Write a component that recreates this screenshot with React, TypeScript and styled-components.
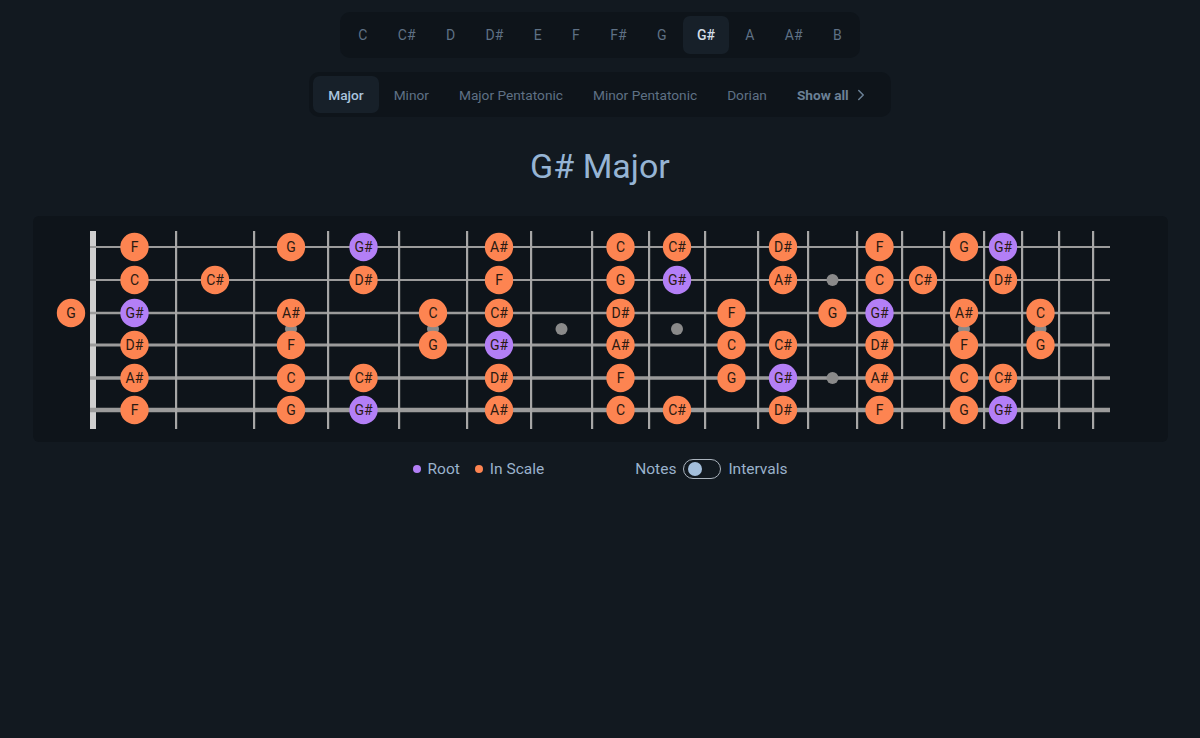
import React, { useState } from "react";
import styled, { createGlobalStyle } from "styled-components";
import { ChevronRight } from "lucide-react";

const NOTES = ["C", "C#", "D", "D#", "E", "F", "F#", "G", "G#", "A", "A#", "B"];
const SCALES: { [name: string]: number[] } = {
  Major: [0, 2, 4, 5, 7, 9, 11],
  Minor: [0, 2, 3, 5, 7, 8, 10],
  "Major Pentatonic": [0, 2, 4, 7, 9],
  "Minor Pentatonic": [0, 3, 5, 7, 10],
  Dorian: [0, 2, 3, 5, 7, 9, 10],
};

// open strings, high e on top
const TUNING = [4, 11, 7, 2, 9, 4];
const STRING_Y = [31, 64, 97, 129, 162, 194];
const STRING_W = [2, 2, 2.5, 3, 3.5, 4.5];
const NUT_X = 60;
const FRETS = [143, 221, 295, 366, 434, 498, 559, 616, 672, 725, 775, 824, 869, 911, 951, 989, 1026, 1060];
const STRING_END = 1077;
const OPEN_X = 38;
const SHOWN_FRETS = 17;

const colors = {
  page: "#121920",
  panel: "#0e141a",
  active: "#172029",
  muted: "#5f7185",
  text: "#9ab2cc",
  root: "#b37ff6",
  scale: "#fd8451",
};

const GlobalStyle = createGlobalStyle`
  html, body {
    margin: 0;
    background: ${colors.page};
    font-family: Roboto, "Noto Sans", sans-serif;
  }
`;

const Page = styled.div`
  min-height: 100vh;
  padding-top: 12px;
  display: flex;
  flex-direction: column;
  align-items: center;
`;

const Bar = styled.div`
  display: flex;
  align-items: center;
  gap: 2.4px;
  padding: 4px;
  border-radius: 10px;
  background: ${colors.panel};
`;

const KeyButton = styled.button<{ $active?: boolean }>`
  height: 38px;
  padding: 0 14px;
  border: none;
  border-radius: 7px;
  background: ${(p) => (p.$active ? colors.active : "transparent")};
  color: ${(p) => (p.$active ? "#d3dde7" : colors.muted)};
  font-family: inherit;
  font-size: 14px;
  font-weight: ${(p) => (p.$active ? 500 : 400)};
  cursor: pointer;
`;

const ScaleBar = styled(Bar)`
  margin-top: 14px;
  gap: 0;
`;

const ScaleButton = styled(KeyButton)`
  height: 37px;
  padding: 0 15px;
  font-size: 13.7px;
  color: ${(p) => (p.$active ? "#aac4de" : colors.muted)};
`;

const ShowAll = styled(ScaleButton)`
  display: flex;
  align-items: center;
  gap: 3px;
  padding-right: 17px;
  font-weight: 700;
  color: #6b8096;
`;

const Title = styled.h1`
  margin: 28px 0 0;
  font-size: 34px;
  line-height: 42px;
  font-weight: 400;
  color: #96b4d4;
`;

const Board = styled.div`
  margin-top: 29px;
  width: 1135px;
  height: 226px;
  border-radius: 6px;
  background: ${colors.panel};
`;

const NoteLabel = styled.text`
  font-family: Roboto, "Noto Sans", sans-serif;
  font-size: 14px;
  fill: #2a1a12;
`;

const Legend = styled.div`
  margin-top: 16px;
  display: flex;
  align-items: center;
  gap: 91px;
  font-size: 15.5px;
  line-height: 22px;
  color: ${colors.text};
`;

const Group = styled.div<{ $gap: number }>`
  display: flex;
  align-items: center;
  gap: ${(p) => p.$gap}px;
`;

const Item = styled.span`
  display: flex;
  align-items: center;
  gap: 7px;
`;

const Dot = styled.span<{ $color: string }>`
  width: 8px;
  height: 8px;
  border-radius: 50%;
  background: ${(p) => p.$color};
`;

const Toggle = styled.button<{ $on: boolean }>`
  position: relative;
  width: 38px;
  height: 20px;
  padding: 0;
  border: 1.5px solid #aab3bd;
  border-radius: 10px;
  background: transparent;
  cursor: pointer;
`;

const Knob = styled.span<{ $on: boolean }>`
  position: absolute;
  top: 1.5px;
  left: ${(p) => (p.$on ? "19px" : "3.5px")};
  width: 14px;
  height: 14px;
  border-radius: 50%;
  background: #a4bfdc;
`;

const fretCenter = (n: number) =>
  n === 0 ? OPEN_X : ((n === 1 ? NUT_X : FRETS[n - 2]) + FRETS[n - 1]) / 2;

const Fretboard = (props: { root: number; scale: number[]; intervals: boolean }) => {
  const inScale = props.scale.map((i) => (props.root + i) % 12);
  const midY = (STRING_Y[2] + STRING_Y[3]) / 2;
  return (
    <Board>
      <svg width="1135" height="226" viewBox="0 0 1135 226">
        <rect x={NUT_X - 3} y={15} width={6} height={198} fill="#cfcfcf" />
        {STRING_Y.map((y, i) => (
          <rect
            key={i}
            x={NUT_X - 3}
            y={y - STRING_W[i] / 2}
            width={STRING_END - NUT_X + 3}
            height={STRING_W[i]}
            fill="#9b9b9b"
          />
        ))}
        {FRETS.map((x, i) => (
          <rect key={i} x={x - 1} y={15} width={2.2} height={198} fill="#a6a6a6" />
        ))}
        {[3, 5, 7, 9, 15, 17].map((n) => (
          <circle key={n} cx={fretCenter(n)} cy={midY} r={6} fill="#8a8a8a" />
        ))}
        <circle cx={fretCenter(12)} cy={STRING_Y[1]} r={6} fill="#8a8a8a" />
        <circle cx={fretCenter(12)} cy={STRING_Y[4]} r={6} fill="#8a8a8a" />
        {TUNING.map((open, s) =>
          Array.from({ length: SHOWN_FRETS + 1 }, (_, f) => {
            const note = (open + f) % 12;
            if (!inScale.includes(note)) return null;
            const isRoot = note === props.root;
            const label = props.intervals
              ? String(inScale.indexOf(note) + 1)
              : NOTES[note];
            return (
              <g key={s + "-" + f}>
                <circle
                  cx={fretCenter(f)}
                  cy={STRING_Y[s]}
                  r={14.2}
                  fill={isRoot ? colors.root : colors.scale}
                />
                <NoteLabel
                  x={fretCenter(f)}
                  y={STRING_Y[s] + 5}
                  textAnchor="middle"
                >
                  {label}
                </NoteLabel>
              </g>
            );
          })
        )}
      </svg>
    </Board>
  );
};

export default function App() {
  const [root, setRoot] = useState(8);
  const [scale, setScale] = useState("Major");
  const [intervals, setIntervals] = useState(false);

  return (
    <>
      <GlobalStyle />
      <Page>
        <Bar>
          {NOTES.map((n, i) => (
            <KeyButton key={n} $active={i === root} onClick={() => setRoot(i)}>
              {n}
            </KeyButton>
          ))}
        </Bar>
        <ScaleBar>
          {Object.keys(SCALES).map((s) => (
            <ScaleButton key={s} $active={s === scale} onClick={() => setScale(s)}>
              {s}
            </ScaleButton>
          ))}
          <ShowAll>
            Show all
            <ChevronRight size={18} strokeWidth={2} />
          </ShowAll>
        </ScaleBar>
        <Title>
          {NOTES[root]} {scale}
        </Title>
        <Fretboard root={root} scale={SCALES[scale]} intervals={intervals} />
        <Legend>
          <Group $gap={15}>
            <Item>
              <Dot $color={colors.root} />
              Root
            </Item>
            <Item>
              <Dot $color={colors.scale} />
              In Scale
            </Item>
          </Group>
          <Group $gap={7}>
            Notes
            <Toggle $on={intervals} onClick={() => setIntervals(!intervals)}>
              <Knob $on={intervals} />
            </Toggle>
            Intervals
          </Group>
        </Legend>
      </Page>
    </>
  );
}
